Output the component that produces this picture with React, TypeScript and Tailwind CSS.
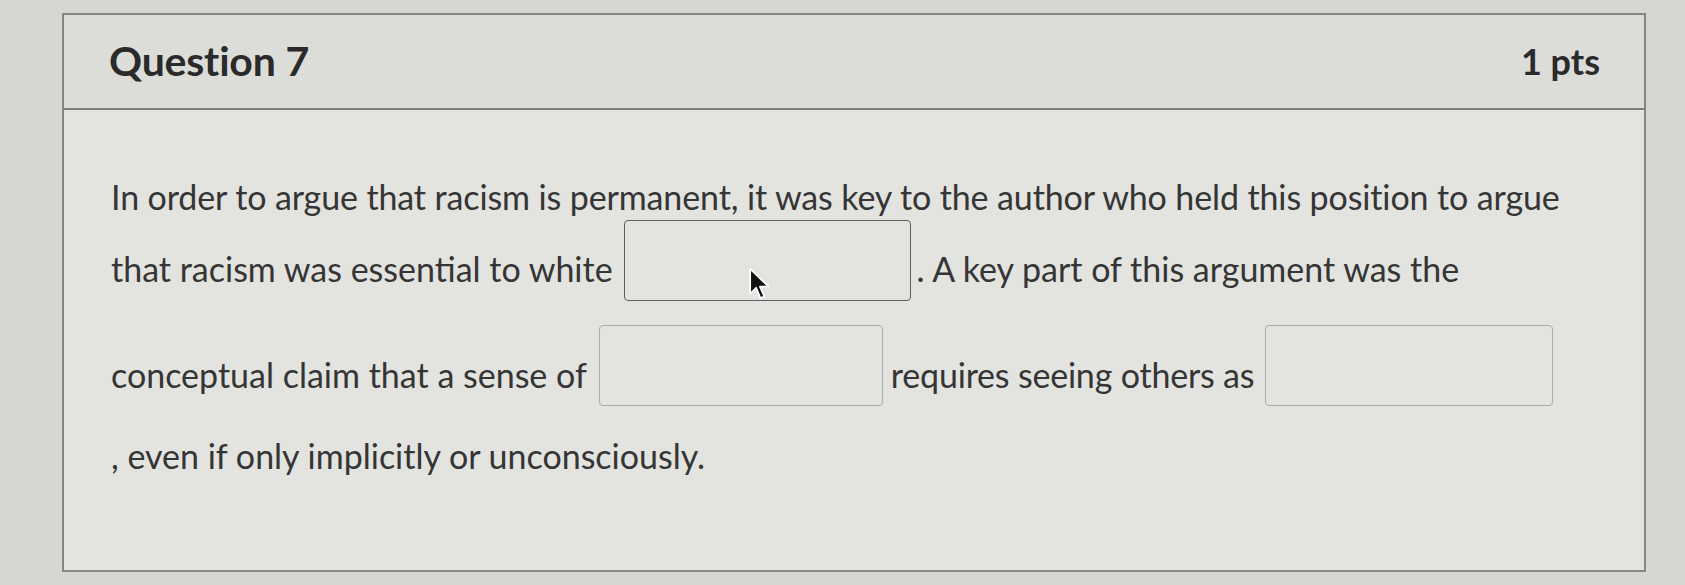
import React from 'react';

const font = { fontFamily: 'Lato, "Open Sans", sans-serif' };

function Blank({ w, dark }: { w: string; dark?: boolean }) {
  return (
    <input
      type="text"
      aria-label="blank"
      className={`${w} h-[81px] shrink-0 rounded-[4px] bg-transparent outline-none border-[1.5px] ${
        dark ? 'border-[#5c6066]' : 'border-[#a9aaab]'
      }`}
    />
  );
}

export default function App() {
  return (
    <div className="w-[1685px] h-[585px] bg-[#d6d6d3] pt-[13px] pl-[62px] overflow-hidden" style={font}>
      <div className="relative w-[1584px] h-[559px] border-2 border-[#858585] bg-[#e3e3e0] flex flex-col">
        {/* Header */}
        <div className="h-[95px] shrink-0 bg-[#dcdcd9] border-b-2 border-[#7e7e7e] flex items-center justify-between pl-[45px] pr-[44px] pb-[2px] text-[#2a2a2a]">
          <h2 className="text-[41px] font-bold tracking-[-0.2px]">Question 7</h2>
          <span className="text-[36px] font-bold">1 pts</span>
        </div>

        {/* Body */}
        <div className="pl-[47px] text-[34px] leading-[40px] text-[#353535]">
          <p className="mt-[67px] tracking-[-0.12px]">
            In order to argue that racism is permanent, it was key to the author who held this position to argue
          </p>
          <div className="mt-[3px] flex items-start">
            <span className="mt-[29px] mr-[11px]">that racism was essential to white</span>
            <Blank w="w-[287px]" dark />
            <span className="mt-[29px] ml-[6px]">. A key part of this argument was the</span>
          </div>
          <div className="mt-[24px] flex items-start">
            <span className="mt-[30px] mr-[12px]">conceptual claim that a sense of</span>
            <Blank w="w-[284px]" />
            <span className="mt-[30px] ml-[8px] mr-[11px] tracking-[-0.2px]">requires seeing others as</span>
            <Blank w="w-[288px]" />
          </div>
          <p className="mt-[30px]">, even if only implicitly or unconsciously.</p>
        </div>

        {/* mouse cursor */}
        <svg
          className="absolute left-[684px] top-[251px]"
          width="26"
          height="36"
          viewBox="0 0 24 32"
        >
          <path
            d="M2 2 L2 25 L7.5 19.5 L11.5 29 L15 27.5 L11 18.5 L19 18.5 Z"
            fill="#111"
            stroke="#fff"
            strokeWidth="1.6"
            strokeLinejoin="round"
          />
        </svg>
      </div>
    </div>
  );
}
